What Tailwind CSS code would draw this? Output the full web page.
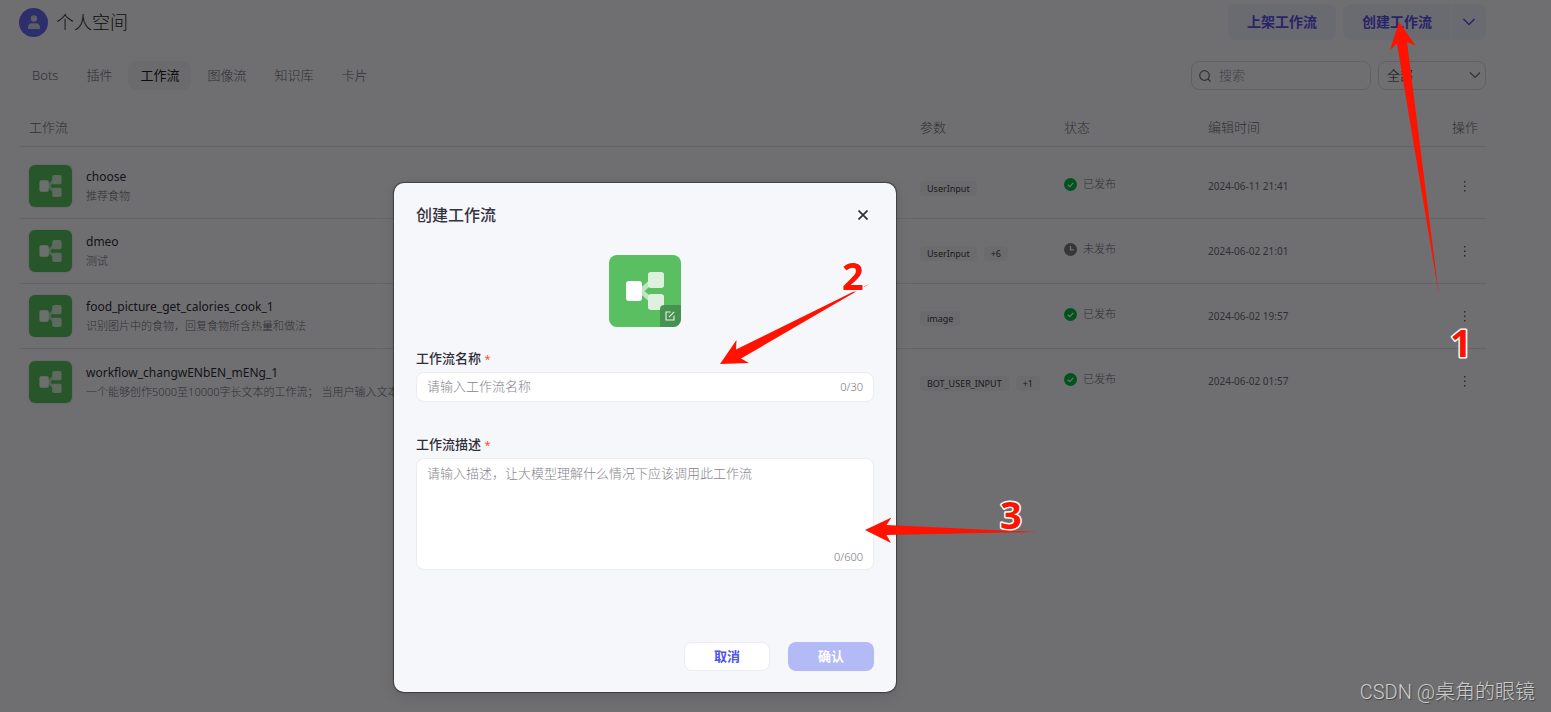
<!DOCTYPE html>
<html lang="zh-CN">
  <head>
    <meta charset="UTF-8" />
    <meta name="viewport" content="width=device-width, initial-scale=1.0" />
    <title>个人空间 - 工作流</title>
    <script src="https://cdn.jsdelivr.net/npm/@tailwindcss/browser@4"></script>
  </head>
  <body class="relative min-h-screen overflow-hidden bg-[#f7f7fa] font-['Noto_Sans','Noto_Sans_CJK_SC',sans-serif] text-[13px] text-[#1c1d23]">
    <svg class="hidden">
      <symbol id="flow" viewBox="0 0 72 72">
        <path d="M32 36 L43 26 M32 36 L43 46" stroke="#fff" stroke-opacity=".6" stroke-width="5" fill="none" />
        <rect x="39" y="17" width="16" height="16" rx="3" fill="#def1df" />
        <rect x="39" y="39" width="16" height="16" rx="3" fill="#def1df" />
        <rect x="17" y="26" width="16" height="20" rx="3" fill="#fff" />
      </symbol>
      <symbol id="ok" viewBox="0 0 14 14">
        <circle cx="7" cy="7" r="7" fill="#00b83e" />
        <path d="M4 7.2 L6.2 9.3 L10 5.3" stroke="#f7f7fa" stroke-width="1.4" fill="none" />
      </symbol>
      <symbol id="wait" viewBox="0 0 14 14">
        <circle cx="7" cy="7" r="7" fill="#78787f" />
        <path d="M7 3.2 V7.4 H10.4" stroke="#f7f7fa" stroke-width="1.4" fill="none" />
      </symbol>
    </svg>

    <!-- page -->
    <main class="pt-1 pr-[65px] pl-5">
      <header class="flex h-9 items-center">
        <svg class="-ml-px h-[29px] w-[29px]" viewBox="0 0 29 29">
          <circle cx="14.5" cy="14.5" r="14.5" fill="#6569f2" />
          <circle cx="15" cy="10.500" r="3.2" fill="#d0d0e0" />
          <path d="M9 19.5 c0-3 2-4.2 4-4.2 h4 c2 0 4 1.200 4 4.200 c0 1-.5 1.500-1.500 1.500 h-9 c-1 0-1.500-.5-1.500-1.500z" fill="#d0d0e0" />
        </svg>
        <h1 class="ml-2 text-lg font-light">个人空间</h1>
        <div class="ml-auto flex gap-[7px] text-sm font-bold text-[#5a50e8]">
          <button class="h-9 w-[108px] rounded-lg bg-[#ececfb]">上架工作流</button>
          <div class="flex">
            <button class="h-9 w-[108px] rounded-l-lg bg-[#ececfb]">创建工作流</button>
            <button class="ml-px flex h-9 w-[34px] items-center justify-center rounded-r-lg bg-[#ececfb]" aria-label="更多">
              <svg class="h-3 w-3" viewBox="0 0 12 12" fill="none" stroke="currentColor" stroke-width="1.5"><path d="M0.500 3 L6 8.500 L11.500 3" /></svg>
            </button>
          </div>
        </div>
      </header>

      <div class="mt-[21px] flex h-[29px] items-center justify-between">
        <nav class="flex gap-1 font-light text-[#6b6b75]">
          <button class="h-[29px] rounded-lg px-3">Bots</button>
          <button class="h-[29px] rounded-lg px-3">插件</button>
          <button class="h-[29px] rounded-lg bg-[#ededf1] px-3 font-normal text-[#1c1d23]">工作流</button>
          <button class="h-[29px] rounded-lg px-3">图像流</button>
          <button class="h-[29px] rounded-lg px-3">知识库</button>
          <button class="h-[29px] rounded-lg px-3">卡片</button>
        </nav>
        <div class="flex gap-[7px]">
          <label class="flex h-[29px] w-[180px] items-center gap-2 rounded-lg border border-[#d6d6dc] px-[7px]">
            <svg class="h-3 w-3 shrink-0 text-[#6b6b75]" viewBox="0 0 12 12" fill="none" stroke="currentColor" stroke-width="1.2"><circle cx="5.500" cy="5.500" r="4.800" /><path d="M9 9 L11.500 11.500" /></svg>
            <input type="search" aria-label="搜索" placeholder="搜索" class="w-full min-w-0 font-light outline-none placeholder:text-[#93939c]" />
          </label>
          <div class="relative">
            <select aria-label="状态筛选" class="h-[29px] w-[108px] appearance-none rounded-lg border border-[#d6d6dc] px-2 font-light"><option>全部</option></select>
            <svg class="pointer-events-none absolute top-2 right-[5px] h-3 w-3 text-[#6b6b75]" viewBox="0 0 12 12" fill="none" stroke="currentColor" stroke-width="1.2"><path d="M1 3.500 L6 8.500 L11 3.500" /></svg>
          </div>
        </div>
      </div>

      <table class="mt-5 w-full table-fixed border-separate border-spacing-0">
        <thead>
          <tr class="h-[37px] text-left text-[#6b6b75] [&>th]:border-b [&>th]:border-[#dedee3] [&>th]:pl-[9px] [&>th]:font-light">
            <th>工作流</th>
            <th class="w-36">参数</th>
            <th class="w-36">状态</th>
            <th class="w-[244px]">编辑时间</th>
            <th class="w-[43px]">操作</th>
          </tr>
        </thead>
        <tbody id="rows"></tbody>
      </table>
    </main>

    <!-- mask -->
    <div class="absolute inset-0 bg-black/55"></div>

    <!-- create dialog -->
    <form role="dialog" aria-labelledby="dlg-title" class="absolute top-[183px] left-[394px] w-[502px] rounded-[10px] bg-[#f6f7fb] px-[22px] pt-5 pb-[21px] shadow-[0_0_1px_1px_rgba(0,0,0,0.4),0_4px_14px_rgba(0,0,0,0.1)]">
      <div class="flex h-6 items-center justify-between">
        <h2 id="dlg-title" class="text-base font-medium text-[#34343f]">创建工作流</h2>
        <button type="button" aria-label="关闭" class="flex h-6 w-[22px] items-center justify-center">
          <svg class="h-[10px] w-[10px]" viewBox="0 0 10 10" fill="none" stroke="#2e2e38" stroke-width="1.700"><path d="M0.500 0.500 L9.500 9.500 M9.500 0.500 L0.500 9.500" /></svg>
        </button>
      </div>
      <div class="relative mx-auto mt-7 h-[72px] w-[72px] overflow-hidden rounded-lg bg-[#5abf61]">
        <svg class="h-full w-full"><use href="#flow" /></svg>
        <button type="button" aria-label="更换图标" class="absolute right-0 bottom-0 flex h-[22px] w-[21px] items-center justify-center rounded-tl bg-[#488f50]/95 pr-[2px]">
          <svg class="h-[10px] w-[10px]" viewBox="0 0 10 10" fill="none" stroke="#e6f4e7" stroke-width="1.100"><path d="M5.500 1 H1 V9 H9 V4.800 M4 6 L9.200 0.800" /></svg>
        </button>
      </div>

      <label for="wf-name" class="mt-[21px] block h-5 leading-5 font-medium text-[#2e2e38]">工作流名称 <span class="text-[11px] leading-none text-[#ff5a36]">*</span></label>
      <div class="mt-1 flex h-[30px] items-center rounded-lg border border-[#ececf1] bg-white px-[10px]">
        <input id="wf-name" type="text" maxlength="30" placeholder="请输入工作流名称" class="min-w-0 flex-1 font-light outline-none placeholder:text-[#85858d]" />
        <span class="text-[11px] font-light text-[#74747d]">0/30</span>
      </div>

      <label for="wf-desc" class="mt-8 block h-5 leading-5 font-medium text-[#2e2e38]">工作流描述 <span class="text-[11px] leading-none text-[#ff5a36]">*</span></label>
      <div class="mt-1 flex h-28 flex-col rounded-lg border border-[#ececf1] bg-white px-[10px] py-1">
        <textarea id="wf-desc" maxlength="600" placeholder="请输入描述，让大模型理解什么情况下应该调用此工作流" class="w-full flex-1 resize-none leading-5 font-light outline-none placeholder:text-[#85858d]"></textarea>
        <span class="self-end text-[11px] leading-4 font-light text-[#74747d]">0/600</span>
      </div>

      <div class="mt-[72px] flex justify-end gap-[18px] font-bold">
        <button type="button" class="h-[29px] w-[86px] rounded-lg border border-[#ececf1] bg-white text-[#4d53e8]">取消</button>
        <button type="submit" disabled class="h-[29px] w-[86px] rounded-lg bg-[#b4baf6] text-white">确认</button>
      </div>
    </form>

    <!-- step arrows -->
    <svg class="pointer-events-none absolute top-0 left-0 h-[712px] w-[1551px] font-['Noto_Sans',sans-serif] text-[38px] font-bold" viewBox="0 0 1551 712" fill="#ff1200">
      <path d="M1399 22 L1415.600 45.500 L1407 42 L1439 296 L1397 43.500 L1390 50 Z" />
      <path d="M720 364 L736.500 340 L736 349.500 L870 283.500 L741 358.500 L749 363 Z" />
      <path d="M865 530 L891.500 517.500 L886.500 525 L1036 532 L886.500 535 L891 543 Z" />
      <g stroke="#fff" stroke-width="3" stroke-linejoin="round" paint-order="stroke">
        <text x="1450" y="357">1</text>
        <text x="842" y="290">2</text>
        <text x="1000" y="529">3</text>
      </g>
    </svg>

    <p class="absolute right-4 bottom-1 font-['Roboto','Noto_Sans_CJK_SC',sans-serif] text-xl leading-8 font-light text-[#cccccc] [text-shadow:1px_1px_1px_#444]">CSDN @桌角的眼镜</p>

    <script>
      const rows = [
        { name: 'choose', desc: '推荐食物', params: ['UserInput'], done: true, time: '2024-06-11 21:41' },
        { name: 'dmeo', desc: '测试', params: ['UserInput', '+6'], done: false, time: '2024-06-02 21:01' },
        { name: 'food_picture_get_calories_cook_1', desc: '识别图片中的食物，回复食物所含热量和做法', params: ['image'], done: true, time: '2024-06-02 19:57' },
        { name: 'workflow_changwENbEN_mENg_1', desc: '一个能够创作5000至10000字长文本的工作流； 当用户输入文本创作需求', params: ['BOT_USER_INPUT', '+1'], done: true, time: '2024-06-02 01:57' },
      ];
      document.getElementById('rows').innerHTML = rows.map((r, i) => `
        <tr class="h-[65px] first:h-[72px] [&>td]:pl-[9px] first:[&>td]:pt-[7px] ${i < 3 ? '[&>td]:border-b [&>td]:border-[#dedee3]' : ''}">
          <td>
            <div class="flex items-center gap-[14px]">
              <div class="h-[42px] w-[43px] rounded-md bg-[#5abf61] shadow-[0_0_1px_1px_rgba(0,0,0,0.06)]"><svg class="h-full w-full opacity-90"><use href="#flow" /></svg></div>
              <div class="min-w-0 flex-1">
                <div class="truncate text-xs leading-5 text-[#2e2e38]">${r.name}</div>
                <div class="truncate text-[11px] leading-[18px] font-light text-[#6b6b75]">${r.desc}</div>
              </div>
            </div>
          </td>
          <td>
            <div class="flex gap-[7px] pt-1 text-[9px]">${r.params.map(p => `<span class="h-[15px] rounded bg-[#ededf1] px-[7px] leading-[15px] text-[#3c3c46]">${p}</span>`).join('')}</div>
          </td>
          <td>
            <div class="flex items-center gap-[6px] pb-1 text-[11px] font-light text-[#6b6b75]">
              <svg class="h-[13px] w-[13px]"><use href="${r.done ? '#ok' : '#wait'}" /></svg>${r.done ? '已发布' : '未发布'}
            </div>
          </td>
          <td class="text-[10px] text-[#6b6b75]">${r.time}</td>
          <td>
            <button aria-label="操作" class="flex h-5 w-6 items-center justify-center">
              <svg class="h-[11px] w-[3px]" viewBox="0 0 3 11" fill="#5c5c66"><rect x="1" y="0" width="1.500" height="1.500" /><rect x="1" y="4.500" width="1.500" height="1.500" /><rect x="1" y="9" width="1.500" height="1.500" /></svg>
            </button>
          </td>
        </tr>
      `).join('');
    </script>
  </body>
</html>
